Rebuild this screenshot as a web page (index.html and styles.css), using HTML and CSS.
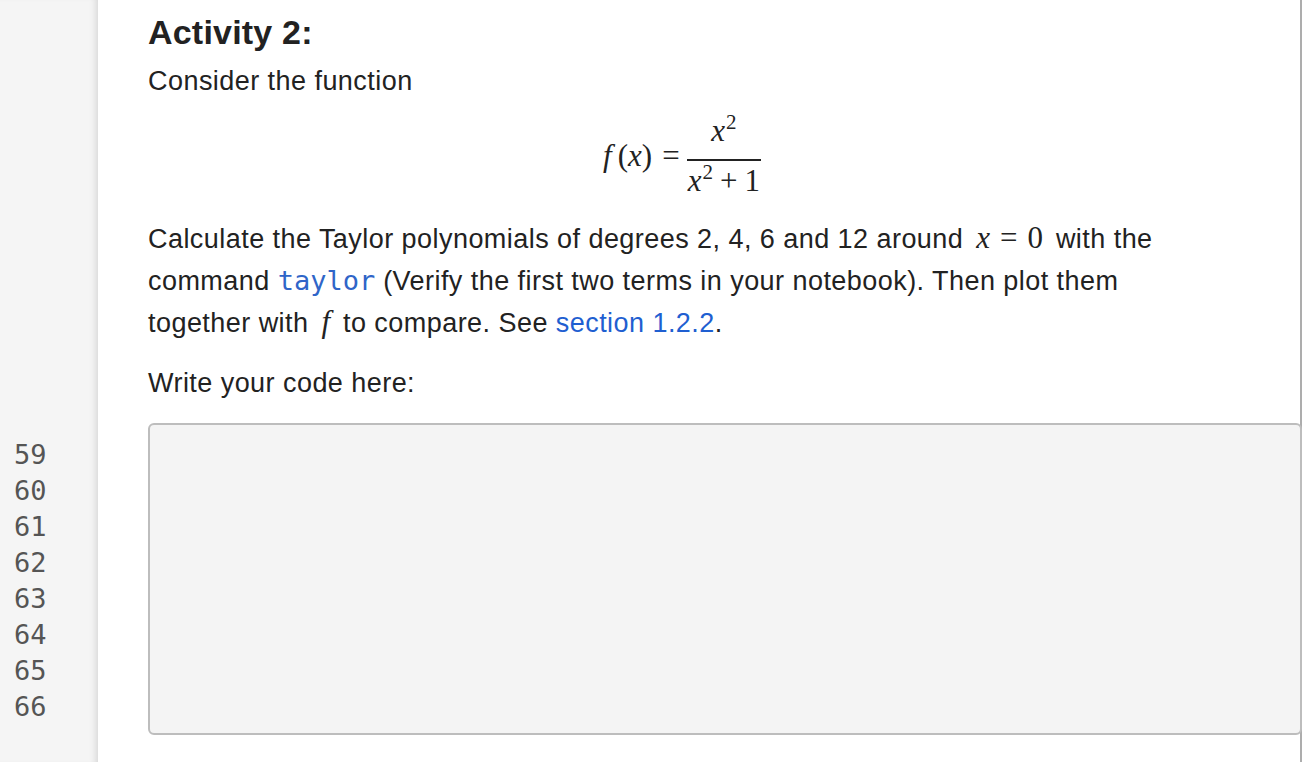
FILE: index.html
```html
<!DOCTYPE html>
<html lang="en">
<head>
<meta charset="utf-8">
<title>Activity 2</title>
<link rel="stylesheet" href="styles.css">
</head>
<body>
<div class="page">
  <aside class="gutter">
    <div class="line-nums">
      <span>59</span><span>60</span><span>61</span><span>62</span>
      <span>63</span><span>64</span><span>65</span><span>66</span>
    </div>
  </aside>
  <main class="cell">
    <h2 class="title">Activity 2:</h2>
    <p class="para first">Consider the function</p>
    <div class="display"><span class="math"><i class="fn">f</i>(<i>x</i>)<span class="rel">=</span><span class="frac"><span class="num"><i>x</i><sup>2</sup></span><span class="bar"></span><span class="den"><i>x</i><sup>2</sup><span class="bin">+</span>1</span></span></span></div>
    <p class="para body">Calculate the Taylor polynomials of degrees 2, 4, 6 and 12 around <span class="math inline"><i>x</i><span class="rel">=</span>0</span> with the command <code class="code">taylor</code> (Verify the first two terms in your notebook). Then plot them together with <span class="math inline"><i>f</i></span> to compare. See <a class="link" href="#">section 1.2.2</a>.</p>
    <p class="para prompt">Write your code here:</p>
    <div class="code-box"></div>
  </main>
</div>
</body>
</html>
```

FILE: styles.css
```css
html, body {
  margin: 0;
  padding: 0;
  background: #ffffff;
}

.page {
  display: flex;
  height: 762px;
  overflow: hidden;
  font-family: "Liberation Sans", Arial, sans-serif;
  color: #222222;
}

.gutter {
  flex: 0 0 98px;
  box-sizing: border-box;
  background: #f5f5f5;
  box-shadow: inset -7px 0 7px -5px rgba(0, 0, 0, 0.13);
  padding: 437px 0 0 14px;
}

.line-nums {
  display: flex;
  flex-direction: column;
  font-family: "DejaVu Sans Mono", monospace;
  font-size: 27px;
  line-height: 36px;
  color: #555555;
}

.cell {
  flex: 0 0 1204px;
  box-sizing: border-box;
  border-right: 2px solid #adadad;
  padding: 12px 0 0 50px;
  display: flex;
  flex-direction: column;
}

.title {
  margin: 0;
  font-size: 34px;
  line-height: 40px;
  font-weight: bold;
  letter-spacing: 0.2px;
  color: #222222;
}

.para {
  margin: 0;
  max-width: 1068px;
  font-size: 27px;
  letter-spacing: 0.45px;
  line-height: 42px;
}

.para.first { margin-top: 8px; }
.para.body { margin-top: 22px; }
.para.prompt { margin-top: 18px; }

.math {
  font-family: "Liberation Serif", "Times New Roman", serif;
  font-size: 31px;
  line-height: 1;
  letter-spacing: 0;
  white-space: nowrap;
}

.math.inline {
  padding: 0 5px;
}

.math i {
  font-style: italic;
}

.math .fn {
  margin-right: 6px;
}

.rel {
  margin: 0 10px;
}

.display .rel {
  margin: 0 7px 0 10px;
}

.bin {
  margin: 0 7px;
}

.display {
  margin-top: 13px;
  max-width: 1068px;
  text-align: center;
  line-height: 0;
}

.frac {
  display: inline-flex;
  flex-direction: column;
  align-items: center;
  vertical-align: 25px;
}

.num, .den {
  display: block;
  line-height: 31px;
  padding: 0 1px;
}

.num { padding-bottom: 13px; }
.den { padding-top: 4px; }

.frac sup {
  font-size: 21px;
  vertical-align: 12px;
  line-height: 0;
  margin-left: 1px;
}

.bar {
  display: block;
  align-self: stretch;
  height: 1.5px;
  background: #222222;
}

.code {
  font-family: "DejaVu Sans Mono", monospace;
  font-size: 27px;
  letter-spacing: 0;
  color: #2f65c8;
}

.link {
  color: #1f5fd1;
  text-decoration: none;
}

.code-box {
  margin-top: 19px;
  margin-right: -2px;
  height: 312px;
  box-sizing: border-box;
  border: 2px solid #bdbdbd;
  border-radius: 6px;
  background: #f4f4f4;
}
```
